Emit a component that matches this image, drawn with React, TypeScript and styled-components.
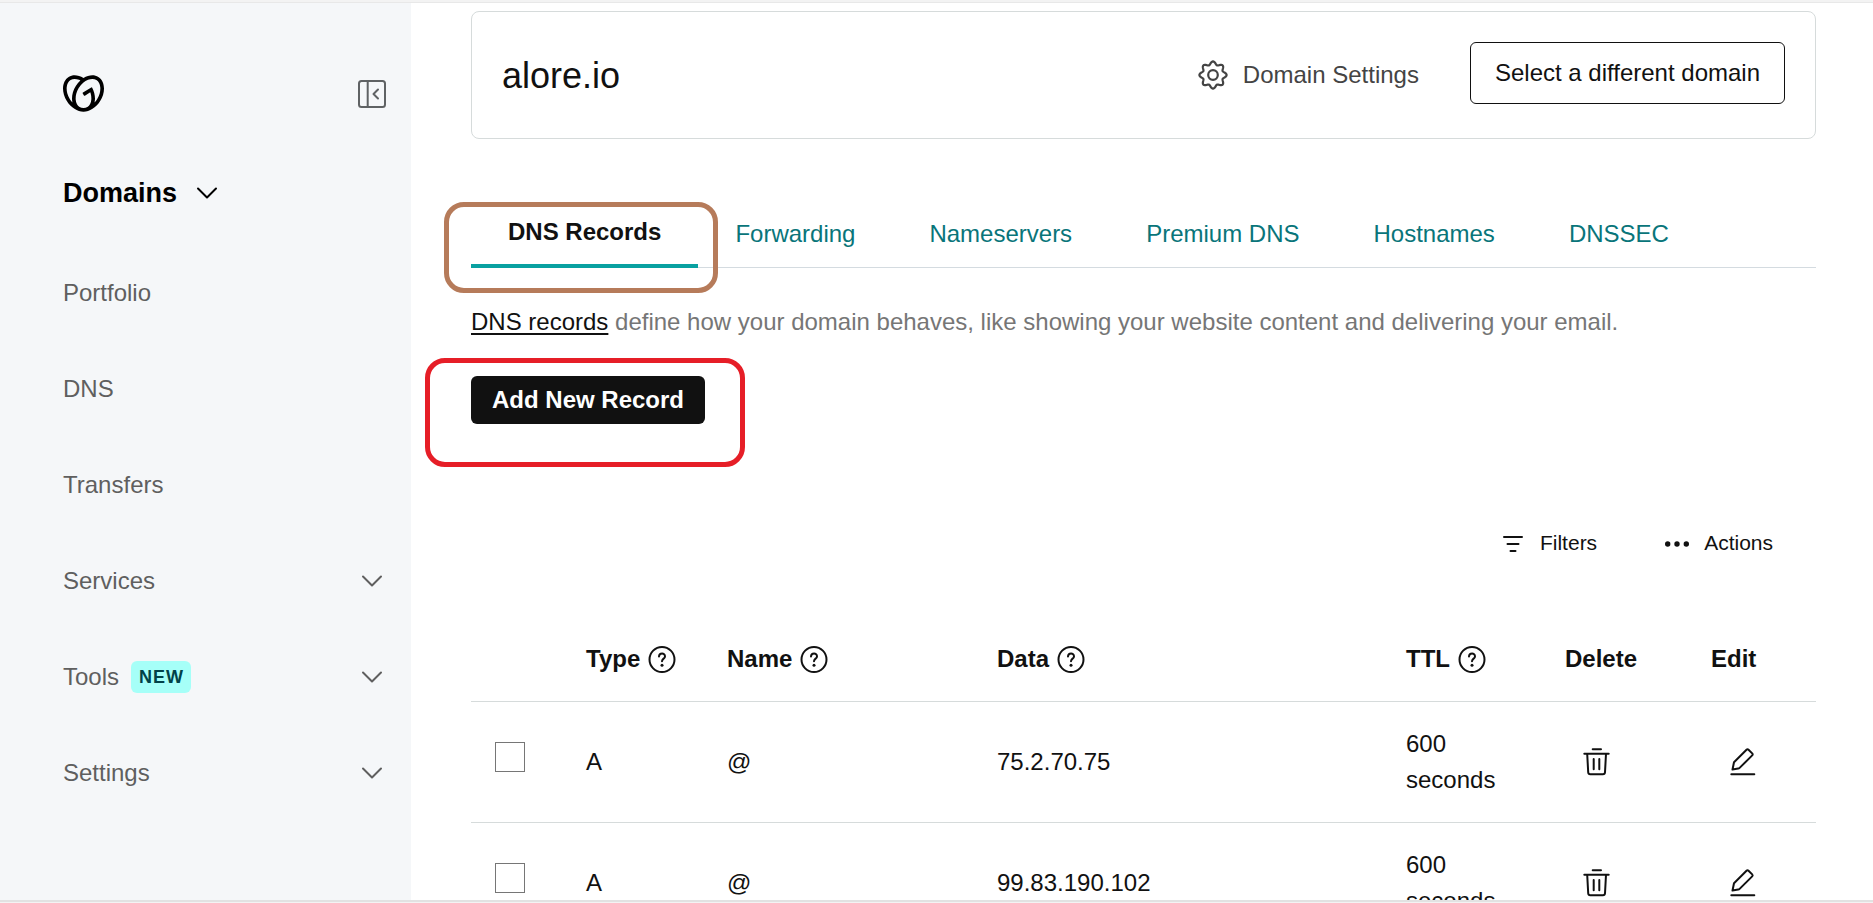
import React from 'react';
import styled, { createGlobalStyle, css } from 'styled-components';
import { SiGodaddy } from 'react-icons/si';

const GlobalStyle = createGlobalStyle`
  *, *::before, *::after { box-sizing: border-box; }
  body { margin: 0; background: #fff; }
  body, button, input { font-family: "Liberation Sans", Arial, sans-serif; }
`;

const Page = styled.div`
  display: flex;
  flex-direction: column;
  height: 100vh;
  overflow: hidden;
  color: #111;
  font-size: 24px;
  line-height: 36px;
`;

const Edge = styled.div<{ $side: 'top' | 'bottom' }>`
  flex: none;
  height: 3px;
  background: #f3f3f3;
  ${(p) =>
    p.$side === 'top'
      ? css`border-bottom: 1px solid #e8e8e8;`
      : css`border-top: 2px solid #e2e2e2;`}
`;

const Shell = styled.div`
  display: flex;
  flex: 1;
  min-height: 0;
`;

const Sidebar = styled.aside`
  flex: none;
  width: 411px;
  padding: 71px 25px 0 63px;
  background: #f5f7f9;
`;

const PlainButton = styled.button`
  display: inline-flex;
  align-items: center;
  padding: 0;
  border: 0;
  background: none;
  color: inherit;
  font-size: inherit;
  line-height: inherit;
  cursor: pointer;
`;

const Brand = styled.div`
  display: flex;
  align-items: center;
  justify-content: space-between;
  height: 39px;
  color: #000;
`;

const BrandLink = styled.a`
  display: flex;
  color: #000;
`;

const CollapseButton = styled(PlainButton)`
  color: #5f6264;
`;

const SectionButton = styled(PlainButton)`
  gap: 16px;
  height: 36px;
  margin: 62px 0 34px;
  color: #000;
  font-size: 27px;
  font-weight: 700;
`;

const NavList = styled.ul`
  margin: 0;
  padding: 0;
  list-style: none;
`;

const NavItem = styled.li`
  display: flex;
  height: 96px;
`;

const navEntry = css`
  display: flex;
  flex: 1;
  align-items: center;
  color: #5f5f5f;
  text-decoration: none;
`;

const NavLink = styled.a`
  ${navEntry}
`;

const NavButton = styled(PlainButton)`
  ${navEntry}
  svg { margin-left: auto; }
`;

const Badge = styled.span`
  height: 32px;
  margin-left: 12px;
  padding: 0 7px 0 8px;
  border-radius: 6px;
  background: #a6fff8;
  color: #004249;
  font-size: 18px;
  font-weight: 700;
  letter-spacing: 1px;
  line-height: 32px;
`;

const Main = styled.main`
  flex: 1;
  min-width: 0;
  overflow: hidden;
  padding: 8px 57px 0 60px;
`;

const DomainCard = styled.header`
  display: flex;
  align-items: center;
  height: 128px;
  padding: 0 30px;
  border: 1px solid #d6dbdb;
  border-radius: 8px;
`;

const DomainName = styled.h1`
  margin: 0 auto 0 0;
  padding-top: 2px;
  font-size: 36px;
  font-weight: 400;
  line-height: 48px;
`;

const SettingsLink = styled.a`
  display: flex;
  align-items: center;
  gap: 14px;
  margin-right: 51px;
  color: #444;
  text-decoration: none;
`;

const OutlineButton = styled(PlainButton)`
  height: 62px;
  margin-bottom: 4px;
  padding: 0 24px;
  border: 1px solid #111;
  border-radius: 6px;
`;

const Tabs = styled.nav`
  display: flex;
  margin-top: 73px;
  border-bottom: 1px solid #d4dbe0;
`;

const Tab = styled.a<{ $active?: boolean }>`
  position: relative;
  height: 55px;
  padding: 4px 37px 0;
  color: #09757a;
  text-decoration: none;
  ${(p) =>
    p.$active &&
    css`
      height: 56px;
      margin-bottom: -1px;
      padding-top: 2px;
      border-bottom: 4px solid #09a1a1;
      color: #111;
      font-weight: 700;
    `}
`;

const Highlight = styled.span<{ $color: string; $inset: string }>`
  position: absolute;
  inset: ${(p) => p.$inset};
  border: 5px solid ${(p) => p.$color};
  border-radius: 20px;
  pointer-events: none;
`;

const Intro = styled.p`
  margin: 36px 0;
  color: #767676;
  a {
    color: #111;
    text-decoration-thickness: 2px;
    text-underline-offset: 3px;
  }
`;

const PrimaryButton = styled(PlainButton)`
  position: relative;
  height: 48px;
  padding: 0 21px;
  border-radius: 6px;
  background: #111;
  color: #fff;
  font-weight: 700;
`;

const TableTools = styled.div`
  display: flex;
  justify-content: flex-end;
  gap: 66px;
  margin-top: 101px;
  padding-right: 43px;
`;

const ToolButton = styled(PlainButton)`
  gap: 13px;
  font-size: 21px;
`;

const Records = styled.table`
  width: 100%;
  margin-top: 56px;
  border-collapse: collapse;
  table-layout: fixed;
`;

const Column = styled.col<{ $width?: number }>`
  width: ${(p) => (p.$width ? `${p.$width}px` : 'auto')};
`;

const HeadCell = styled.th`
  padding: 24px 0;
  border-bottom: 1px solid #d6dbdb;
  text-align: left;
  white-space: nowrap;
`;

const HeadLabel = styled.span`
  display: flex;
  align-items: center;
  gap: 8px;
`;

const Cell = styled.td`
  padding: 24px 40px 24px 0;
  border-bottom: 1px solid #d6dbdb;
`;

const CheckCell = styled(Cell)`
  padding: 0 0 10px 24px;
`;

const ActionCell = styled(Cell)`
  padding: 0 0 0 16px;
`;

const Checkbox = styled.input`
  display: block;
  width: 30px;
  height: 30px;
  margin: 0;
  border: 1px solid #767676;
  background: #fff;
  appearance: none;
  &:checked { background: #09757a; }
`;

const IconButton = styled(PlainButton)`
  display: flex;
`;

const stroke = {
  fill: 'none',
  stroke: 'currentColor',
  strokeLinecap: 'round' as const,
  strokeLinejoin: 'round' as const,
};

const CollapseIcon = () => (
  <svg width="28" height="28" viewBox="0 0 28 28" {...stroke} strokeWidth="2" aria-hidden="true">
    <rect x="1" y="1" width="26" height="26" rx="2.5" />
    <path d="M9.7 1V27M20 9.5L15.5 14L20 18.5" />
  </svg>
);

const Chevron = () => (
  <svg width="28" height="28" viewBox="0 0 28 28" {...stroke} strokeWidth="2" aria-hidden="true">
    <path d="M5 9.5L14 18.5L23 9.5" />
  </svg>
);

// Outline of a cog with eight rounded teeth.
const cogOutline = Array.from({ length: 120 }, (_, i) => {
  const angle = (i / 120) * Math.PI * 2;
  const radius = 12 + 1.6 * Math.cos(8 * angle);
  return `${(16 + radius * Math.cos(angle)).toFixed(2)},${(16 + radius * Math.sin(angle)).toFixed(2)}`;
}).join(' ');

const GearIcon = () => (
  <svg width="32" height="32" viewBox="0 0 32 32" {...stroke} strokeWidth="2.2" aria-hidden="true">
    <circle cx="16" cy="16" r="4.8" />
    <polygon points={cogOutline} />
  </svg>
);

const FilterIcon = () => (
  <svg width="28" height="28" viewBox="0 0 28 28" {...stroke} strokeWidth="2" aria-hidden="true">
    <path d="M5 8H23M8.5 15H19.5M11.5 22H16.5" />
  </svg>
);

const DotsIcon = () => (
  <svg width="28" height="28" viewBox="0 0 28 28" fill="currentColor" aria-hidden="true">
    <circle cx="4.700" cy="15" r="2.700" />
    <circle cx="14" cy="15" r="2.700" />
    <circle cx="23.300" cy="15" r="2.700" />
  </svg>
);

const HelpIcon = () => (
  <svg width="28" height="28" viewBox="0 0 28 28" {...stroke} strokeWidth="2" aria-hidden="true">
    <circle cx="14" cy="14.5" r="12.5" />
    <path d="M11 11.500C11.200 7.600 17 7.600 17 11.400C17 13.600 14 13.700 14 16.200" />
    <circle cx="14" cy="20.200" r="1.500" fill="currentColor" stroke="none" />
  </svg>
);

const TrashIcon = () => (
  <svg width="32" height="32" viewBox="0 0 32 32" {...stroke} strokeWidth="2" aria-hidden="true">
    <path d="M11.700 3.300H20M3.300 7.700H27.700M6.200 7.700L7.200 26.300Q7.300 28.300 9.300 28.300H21.900Q23.900 28.300 24 26.300L25 7.700M12.700 13V23.200M18.300 13V23.200" />
  </svg>
);

const PencilIcon = () => (
  <svg width="32" height="32" viewBox="0 0 32 32" {...stroke} strokeWidth="2" aria-hidden="true">
    <path d="M4.300 28.300H27.300M5.500 23.500L7 16.200L19.500 3.700Q20.500 2.700 21.500 3.700L25.200 7.400Q26.100 8.400 25.200 9.400L12.600 21.900Q12 22.500 11.200 22.600Z" />
  </svg>
);

type NavEntry = { label: string; expandable?: boolean; badge?: string };

const navEntries: NavEntry[] = [
  { label: 'Portfolio' },
  { label: 'DNS' },
  { label: 'Transfers' },
  { label: 'Services', expandable: true },
  { label: 'Tools', expandable: true, badge: 'NEW' },
  { label: 'Settings', expandable: true },
];

const tabs = ['DNS Records', 'Forwarding', 'Nameservers', 'Premium DNS', 'Hostnames', 'DNSSEC'];

const columns: { label: string; help?: boolean; width?: number }[] = [
  { label: 'Type', help: true, width: 141 },
  { label: 'Name', help: true, width: 270 },
  { label: 'Data', help: true },
  { label: 'TTL', help: true, width: 159 },
  { label: 'Delete', width: 146 },
  { label: 'Edit', width: 105 },
];

const records = [
  { type: 'A', name: '@', data: '75.2.70.75', ttl: '600 seconds' },
  { type: 'A', name: '@', data: '99.83.190.102', ttl: '600 seconds' },
];

export default function App() {
  return (
    <Page>
      <GlobalStyle />
      <Edge $side="top" />
      <Shell>
        <Sidebar>
          <Brand>
            <BrandLink href="#home" aria-label="Home"><SiGodaddy size={41} /></BrandLink>
            <CollapseButton type="button" aria-label="Collapse sidebar"><CollapseIcon /></CollapseButton>
          </Brand>
          <SectionButton type="button">Domains<Chevron /></SectionButton>
          <NavList>
            {navEntries.map(({ label, expandable, badge }) => (
              <NavItem key={label}>
                {expandable ? (
                  <NavButton type="button" aria-expanded={false}>
                    {label}
                    {badge && <Badge>{badge}</Badge>}
                    <Chevron />
                  </NavButton>
                ) : (
                  <NavLink href={`#${label.toLowerCase()}`}>{label}</NavLink>
                )}
              </NavItem>
            ))}
          </NavList>
        </Sidebar>
        <Main>
          <DomainCard>
            <DomainName>alore.io</DomainName>
            <SettingsLink href="#domain-settings"><GearIcon />Domain Settings</SettingsLink>
            <OutlineButton type="button">Select a different domain</OutlineButton>
          </DomainCard>
          <Tabs aria-label="DNS sections">
            {tabs.map((label, i) => (
              <Tab key={label} href={`#tab-${i}`} $active={i === 0} aria-current={i === 0 ? 'page' : undefined}>
                {label}
                {i === 0 && <Highlight $color="#b67b5a" $inset="-10px -20px -29px -27px" />}
              </Tab>
            ))}
          </Tabs>
          <Intro>
            <a href="#about-records">DNS records</a> define how your domain behaves, like showing your website content
            and delivering your email.
          </Intro>
          <PrimaryButton type="button">
            Add New Record
            <Highlight $color="#e61e27" $inset="-18px -40px -43px -46px" />
          </PrimaryButton>
          <TableTools>
            <ToolButton type="button"><FilterIcon />Filters</ToolButton>
            <ToolButton type="button"><DotsIcon />Actions</ToolButton>
          </TableTools>
          <Records>
            <colgroup>
              <Column $width={115} />
              {columns.map((c) => <Column key={c.label} $width={c.width} />)}
            </colgroup>
            <thead>
              <tr>
                <HeadCell as="td" />
                {columns.map((c) => (
                  <HeadCell key={c.label} scope="col">
                    <HeadLabel>
                      {c.label}
                      {c.help && <IconButton type="button" aria-label={`About ${c.label}`}><HelpIcon /></IconButton>}
                    </HeadLabel>
                  </HeadCell>
                ))}
              </tr>
            </thead>
            <tbody>
              {records.map((r) => (
                <tr key={r.data}>
                  <CheckCell><Checkbox type="checkbox" aria-label={`Select record ${r.data}`} /></CheckCell>
                  <Cell>{r.type}</Cell>
                  <Cell>{r.name}</Cell>
                  <Cell>{r.data}</Cell>
                  <Cell>{r.ttl}</Cell>
                  <ActionCell><IconButton type="button" aria-label="Delete record"><TrashIcon /></IconButton></ActionCell>
                  <ActionCell><IconButton type="button" aria-label="Edit record"><PencilIcon /></IconButton></ActionCell>
                </tr>
              ))}
            </tbody>
          </Records>
        </Main>
      </Shell>
      <Edge $side="bottom" />
    </Page>
  );
}
